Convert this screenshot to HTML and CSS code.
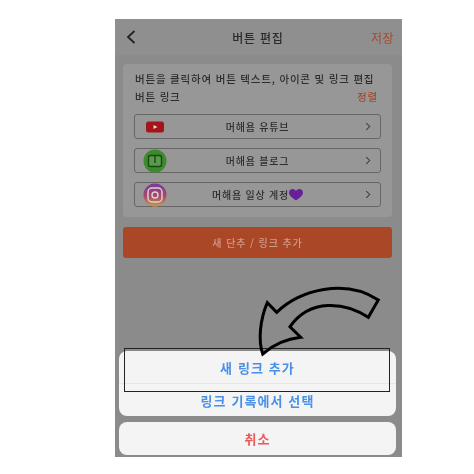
FILE: index.html
```html
<!DOCTYPE html>
<html lang="ko">
<head>
<meta charset="utf-8">
<title>버튼 편집</title>
<link rel="stylesheet" href="styles.css">
</head>
<body>
<main class="phone">
  <div class="screen">
    <header class="topbar">
      <svg class="back" width="10" height="14" viewBox="0 0 10 14"><path d="M8.5 1 L2 7 L8.5 13" fill="none" stroke="#222" stroke-width="1.8"/></svg>
      <h1 class="title">버튼 편집</h1>
      <span class="save">저장</span>
    </header>
    <section class="card">
      <p class="hint">버튼을 클릭하여 버튼 텍스트, 아이콘 및 링크 편집</p>
      <div class="card-head"><span>버튼 링크</span><span class="sort">정렬</span></div>
      <div class="links">
        <a class="link">
          <svg class="ico" width="24" height="24" viewBox="0 0 24 24"><rect x="3" y="6.5" width="18" height="11" rx="2.5" fill="#a5141a"/><path d="M10.5 10 L14.5 12 L10.5 14 Z" fill="#e8d8c8"/></svg>
          <span class="label">머해욤 유튜브</span>
          <svg class="chev" width="6" height="9" viewBox="0 0 7 10"><path d="M1.5 1 L5.5 5 L1.5 9" fill="none" stroke="#3a3a3a" stroke-width="1.2"/></svg>
        </a>
        <a class="link">
          <svg class="ico" width="24" height="24" viewBox="0 0 24 24"><circle cx="12" cy="12" r="11.5" fill="#3d8a2c"/><rect x="5.5" y="6.5" width="13" height="11" rx="2" fill="#5a9a48" stroke="#17471a" stroke-width="1.4"/><path d="M12 6.5 V14" stroke="#17471a" stroke-width="1.4"/></svg>
          <span class="label">머해욤 블로그</span>
          <svg class="chev" width="6" height="9" viewBox="0 0 7 10"><path d="M1.5 1 L5.5 5 L1.5 9" fill="none" stroke="#3a3a3a" stroke-width="1.2"/></svg>
        </a>
        <a class="link">
          <svg class="ico" width="24" height="24" viewBox="0 0 24 24"><defs><linearGradient id="ig" x1="0" y1="0" x2="0" y2="1"><stop offset="0" stop-color="#7a3a9a"/><stop offset=".55" stop-color="#a8486a"/><stop offset="1" stop-color="#c49a4a"/></linearGradient></defs><circle cx="12" cy="12" r="11.5" fill="url(#ig)"/><rect x="5" y="5" width="14" height="14" rx="4" fill="none" stroke="#ddd0d0" stroke-width="1.5"/><circle cx="12" cy="12" r="3" fill="none" stroke="#ddd0d0" stroke-width="1.5"/></svg>
          <span class="label">머해욤 일상 계정<svg class="heart" width="14" height="12" viewBox="0 0 14 12"><path d="M7 11.5 C1 7.5 0 5.5 0 3.5 C0 1.5 1.7 0 3.5 0 C5 0 6.3 .8 7 2 C7.7 .8 9 0 10.5 0 C12.3 0 14 1.5 14 3.5 C14 5.5 13 7.5 7 11.5 Z" fill="#6a1f9a"/></svg></span>
          <svg class="chev" width="6" height="9" viewBox="0 0 7 10"><path d="M1.5 1 L5.5 5 L1.5 9" fill="none" stroke="#3a3a3a" stroke-width="1.2"/></svg>
        </a>
      </div>
    </section>
    <button class="add">새 단추 / 링크 추가</button>
  </div>
  <div class="sheet">
    <div class="group">
      <div class="opt first">새 링크 추가</div>
      <div class="opt second">링크 기록에서 선택</div>
    </div>
    <div class="group cancel">취소</div>
  </div>
  <div class="marker"></div>
  <svg class="arrow" width="287" height="70" viewBox="0 0 287 70"><path d="M147.7 54 C143 40 145 20 152.3 2.7 L161.7 12.3 C185 -10 230 -22 263.3 0 L253.3 17.3 C230 2 195 -2 175 26.7 L185.7 37.3 C170 39 158 45 147.7 54 Z" fill="none" stroke="#000" stroke-width="3" stroke-linejoin="miter"/></svg>
</main>
</body>
</html>
```
FILE: styles.css
```css
* { box-sizing: border-box; }
html, body { margin: 0; padding: 0; background: #fff; }
body { width: 474px; height: 474px; overflow: hidden; font-family: "Noto Sans CJK KR", "Noto Sans", sans-serif; }
.phone { position: relative; width: 287px; height: 438px; margin: 19px 0 0 115px; background: #8b8b8b; overflow: hidden; }
.screen { height: 100%; filter: blur(0.6px); }
.topbar { height: 36px; display: flex; align-items: center; justify-content: space-between; padding: 0 8px 0 11px; background: #8f8f8f; }
.title { margin: 0 0 0 9px; font-size: 12px; font-weight: 500; letter-spacing: .8px; color: #2b2b2b; }
.save { font-size: 12px; letter-spacing: .5px; color: #a8472a; }
.card { margin: 9px 10px 0 8px; height: 153px; padding: 7px 11px 0 12px; background: #979797; border-radius: 4px; }
.hint { margin: 0; font-size: 10.5px; font-weight: 500; line-height: 15px; letter-spacing: .8px; color: #2e2e2e; white-space: nowrap; }
.card-head { display: flex; justify-content: space-between; align-items: center; margin-top: 4px; padding-right: 3px; font-size: 10.5px; font-weight: 500; line-height: 14px; letter-spacing: .8px; color: #2e2e2e; }
.sort { color: #a8472a; }
.links { display: flex; flex-direction: column; gap: 9px; margin: 10px 0 0 -1px; }
.link { position: relative; height: 25px; display: flex; align-items: center; justify-content: center; border: 1px solid #666; border-radius: 3px; }
.ico { position: absolute; left: 8px; top: -0.5px; }
.label { display: flex; align-items: center; font-size: 10px; font-weight: 500; letter-spacing: .8px; color: #2e2e2e; }
.heart { margin-left: 0; }
.chev { position: absolute; right: 9px; top: 7px; }
.add { display: block; width: 269px; height: 31px; margin: 10px 0 0 8px; border: 0; border-radius: 3px; background: #a94726; color: #cf9c8a; font: 500 10px "Noto Sans CJK KR", sans-serif; letter-spacing: .9px; }
.sheet { position: absolute; left: 4px; right: 6px; bottom: 2px; display: flex; flex-direction: column; gap: 6px; filter: blur(0.4px); }
.group { background: #f4f4f5; border-radius: 8px; }
.opt { display: flex; justify-content: center; align-items: center; font-size: 13px; font-weight: 700; letter-spacing: 1.1px; color: #4a90e6; }
.first { height: 33px; border-bottom: 1px solid #e6e6e6; }
.second { height: 32px; }
.cancel { height: 33px; display: flex; align-items: center; justify-content: center; font-size: 13px; font-weight: 700; letter-spacing: 1.1px; color: #e85a5a; }
.marker { position: absolute; left: 9px; top: 329px; width: 266px; height: 44px; border: 1px solid #222; }
.arrow { position: absolute; left: 0; top: 281px; overflow: visible; }
```
